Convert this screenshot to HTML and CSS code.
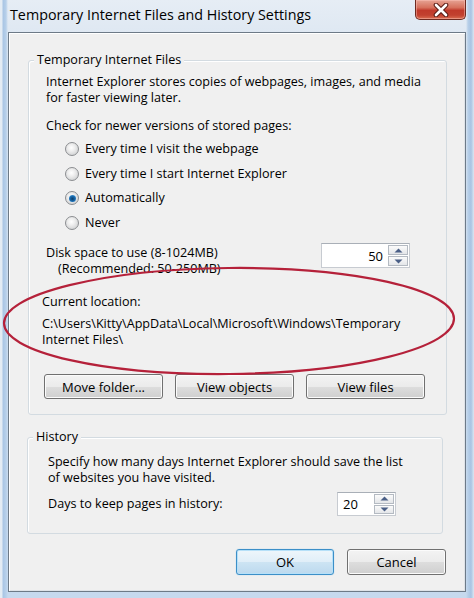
FILE: index.html
```html
<!DOCTYPE html>
<html>
<head>
<meta charset="utf-8">
<link rel="stylesheet" href="styles.css">
</head>
<body>
<div class="frame">
  <div class="titlebar">
    <div class="title">Temporary Internet Files and History Settings</div>
    <div class="close">
      <svg width="20" height="14" viewBox="0 0 20 14">
        <path d="M5 2 L15 12 M15 2 L5 12" stroke="#5a1d16" stroke-width="4.6" stroke-linecap="round"/>
        <path d="M5 2 L15 12 M15 2 L5 12" stroke="#ffffff" stroke-width="2.6" stroke-linecap="round"/>
      </svg>
    </div>
  </div>
  <div class="client">
    <fieldset class="group group-tif">
      <legend>Temporary Internet Files</legend>
      <p class="desc">Internet Explorer stores copies of webpages, images, and media<br>for faster viewing later.</p>
      <p class="check">Check for newer versions of stored pages:</p>
      <div class="radios">
        <div class="radio"><span class="circle"></span>Every time I visit the webpage</div>
        <div class="radio"><span class="circle"></span>Every time I start Internet Explorer</div>
        <div class="radio"><span class="circle checked"></span>Automatically</div>
        <div class="radio"><span class="circle"></span>Never</div>
      </div>
      <div class="disk-row">
        <div class="disk-text">
          <div>Disk space to use (8-1024MB)</div>
          <div class="rec">(Recommended: 50-250MB)</div>
        </div>
        <div class="spin spin-disk">
          <span class="val">50</span>
          <div class="arrows">
            <div class="arrow"><svg width="9" height="5" viewBox="0 0 9 5"><path d="M0.5 4.5 L4.5 0.5 L8.5 4.5 Z" fill="#4a5f86"/></svg></div>
            <div class="arrow"><svg width="9" height="5" viewBox="0 0 9 5"><path d="M0.5 0.5 L4.5 4.5 L8.5 0.5 Z" fill="#4a5f86"/></svg></div>
          </div>
        </div>
      </div>
      <div class="loc-label">Current location:</div>
      <div class="loc-path">C:\Users\Kitty\AppData\Local\Microsoft\Windows\Temporary<br>Internet Files\</div>
      <div class="btn-row">
        <div class="btn">Move folder...</div>
        <div class="btn">View objects</div>
        <div class="btn">View files</div>
      </div>
    </fieldset>
    <fieldset class="group group-hist">
      <legend>History</legend>
      <p class="hist-desc">Specify how many days Internet Explorer should save the list<br>of websites you have visited.</p>
      <div class="days-row">
        <span>Days to keep pages in history:</span>
        <div class="spin spin-days">
          <span class="val">20</span>
          <div class="arrows">
            <div class="arrow"><svg width="9" height="5" viewBox="0 0 9 5"><path d="M0.5 4.5 L4.5 0.5 L8.5 4.5 Z" fill="#4a5f86"/></svg></div>
            <div class="arrow"><svg width="9" height="5" viewBox="0 0 9 5"><path d="M0.5 0.5 L4.5 4.5 L8.5 0.5 Z" fill="#4a5f86"/></svg></div>
          </div>
        </div>
      </div>
    </fieldset>
    <div class="dialog-buttons">
      <div class="btn btn-default">OK</div>
      <div class="btn btn-cancel">Cancel</div>
    </div>
  </div>
  <svg class="annotation" width="474" height="598" viewBox="0 0 474 598">
    <ellipse cx="229" cy="321" rx="225" ry="53" transform="rotate(-0.6 229 321)" fill="none" stroke="#b5213a" stroke-width="2.2"/>
  </svg>
</div>
</body>
</html>
```
FILE: styles.css
```css
* { box-sizing: border-box; }
html, body { margin: 0; padding: 0; }
body {
  width: 474px;
  height: 598px;
  overflow: hidden;
  font-family: "Open Sans", "Noto Sans", sans-serif;
  font-size: 12.6px;
  line-height: 16px;
  color: #000000;
}
.frame {
  position: relative;
  width: 474px;
  height: 598px;
  padding: 0 8px;
  background:
    linear-gradient(to right, #e4ecf4 0px, #e4ecf4 2px, #a9c5e4 3px, #b7d0ea 6px, rgba(255,255,255,0) 8px, rgba(255,255,255,0) 466px, #b7cfe8 468px, #a8c4e3 471px, #dbe6f1 474px),
    linear-gradient(to bottom, #e6edf5 0px, #dde7f2 40px, #cfdeef 300px, #c6d9ee 598px);
}
.titlebar {
  height: 32px;
  display: flex;
  align-items: flex-start;
  justify-content: space-between;
}
.title {
  font-size: 14.3px;
  line-height: 16px;
  margin-top: 7px;
  margin-left: 2px;
  color: #000;
}
.close {
  width: 51px;
  height: 20px;
  border: 1px solid #6e2a20;
  border-top: none;
  border-radius: 0 0 5px 5px;
  background: linear-gradient(to bottom, #e6a394 0%, #d6705c 40%, #c0392a 55%, #c2412f 80%, #d96d52 100%);
  box-shadow: inset 0 0 0 1px rgba(255,200,190,0.45);
  display: flex;
  align-items: center;
  justify-content: center;
}
.client {
  height: 560px;
  border: 1px solid #6d7a87;
  background: #f0f0f0;
  box-shadow: inset 1px 1px 0 #ffffff, inset -1px -1px 0 #dfe3e8;
  padding-top: 0;
}
p { margin: 0; }
.group {
  margin: 0;
  padding: 0;
  border: 1px solid #d3dbe1;
  border-radius: 3px;
  min-inline-size: 0;
  box-shadow: inset 1px 1px 0 #ffffff;
}
.group legend {
  padding: 0 3px;
  margin-left: 5px;
  line-height: 16px;
  background: #f0f0f0;
}
.group-tif {
  margin-top: 19px;
  margin-left: 19px;
  width: 419px;
  padding-bottom: 15px;
}
.desc { margin-top: 6px; margin-left: 17px; }
.check { margin-top: 12px; margin-left: 17px; }
.radios { margin-top: 3px; margin-left: 36px; }
.radio {
  height: 24.5px;
  display: flex;
  align-items: center;
}
.circle {
  width: 14px;
  height: 14px;
  border-radius: 50%;
  border: 1px solid #8b8d90;
  background: radial-gradient(circle at 45% 40%, #ffffff 0%, #eeeeee 35%, #c4c6c8 100%);
  margin-right: 6px;
  position: relative;
  flex: none;
}
.circle.checked::after {
  content: "";
  position: absolute;
  left: 2.5px;
  top: 2.5px;
  width: 7px;
  height: 7px;
  border-radius: 50%;
  background: radial-gradient(circle at 50% 55%, #0b3e6a 0%, #1b6fb5 55%, #7cc3ee 100%);
}
.disk-row {
  margin-top: 10px;
  margin-left: 17px;
  display: flex;
  align-items: flex-start;
}
.rec { margin-left: 12px; }
.spin {
  display: flex;
  background: #ffffff;
  border: 1px solid #c7cbd1;
  border-top-color: #a9afb7;
}
.spin .val {
  flex: 1;
  display: flex;
  align-items: center;
  font-size: 13px;
}
.spin-disk {
  margin-left: auto;
  margin-right: 36px;
  margin-top: -2px;
  width: 89px;
  height: 25px;
}
.spin-disk .val { justify-content: flex-end; padding-right: 5px; }
.spin-days {
  margin-left: auto;
  margin-right: 46px;
  width: 59px;
  height: 24px;
}
.spin-days .val { padding-left: 5px; }
.arrows {
  width: 21px;
  display: flex;
  flex-direction: column;
  padding: 1px 1px 1px 0;
  gap: 1px;
}
.arrow {
  flex: 1;
  border: 1px solid #b4bac2;
  background: linear-gradient(to bottom, #fbfbfb, #e4e6e9);
  display: flex;
  align-items: center;
  justify-content: center;
}
.arrow svg { display: block; }
.loc-label { margin-top: 17px; margin-left: 13px; }
.loc-path { margin-top: 6px; margin-left: 13px; white-space: nowrap; }
.btn-row {
  margin-top: 26px;
  margin-left: 15px;
  display: flex;
  gap: 12px;
}
.btn {
  width: 119px;
  height: 25px;
  border: 1px solid #707070;
  border-radius: 3px;
  background: linear-gradient(to bottom, #f3f3f3 0%, #ebebeb 50%, #dddddd 51%, #cfcfcf 100%);
  box-shadow: inset 0 0 0 1px #fbfbfb;
  display: flex;
  align-items: center;
  justify-content: center;
  color: #000;
  font-size: 13px;
}
.group-hist {
  margin-top: 14px;
  margin-left: 18px;
  width: 416px;
  padding-bottom: 17px;
}
.hist-desc { margin-top: 9px; margin-left: 20px; }
.days-row {
  margin-top: 6px;
  margin-left: 20px;
  display: flex;
  align-items: center;
}
.dialog-buttons {
  margin-top: 15px;
  margin-right: 19px;
  display: flex;
  justify-content: flex-end;
  gap: 13px;
}
.dialog-buttons .btn { width: 98px; height: 26px; }
.dialog-buttons .btn-cancel { width: 99px; }
.btn-default {
  border-color: #3c8fc8;
  background: linear-gradient(to bottom, #eef6fb 0%, #e0eef8 50%, #cde4f3 51%, #bcd9ee 100%);
  box-shadow: inset 0 0 0 1px #b6e0f8, 0 0 1px #7fc3ec;
}
.annotation {
  position: absolute;
  left: 0;
  top: 0;
  pointer-events: none;
}
```
